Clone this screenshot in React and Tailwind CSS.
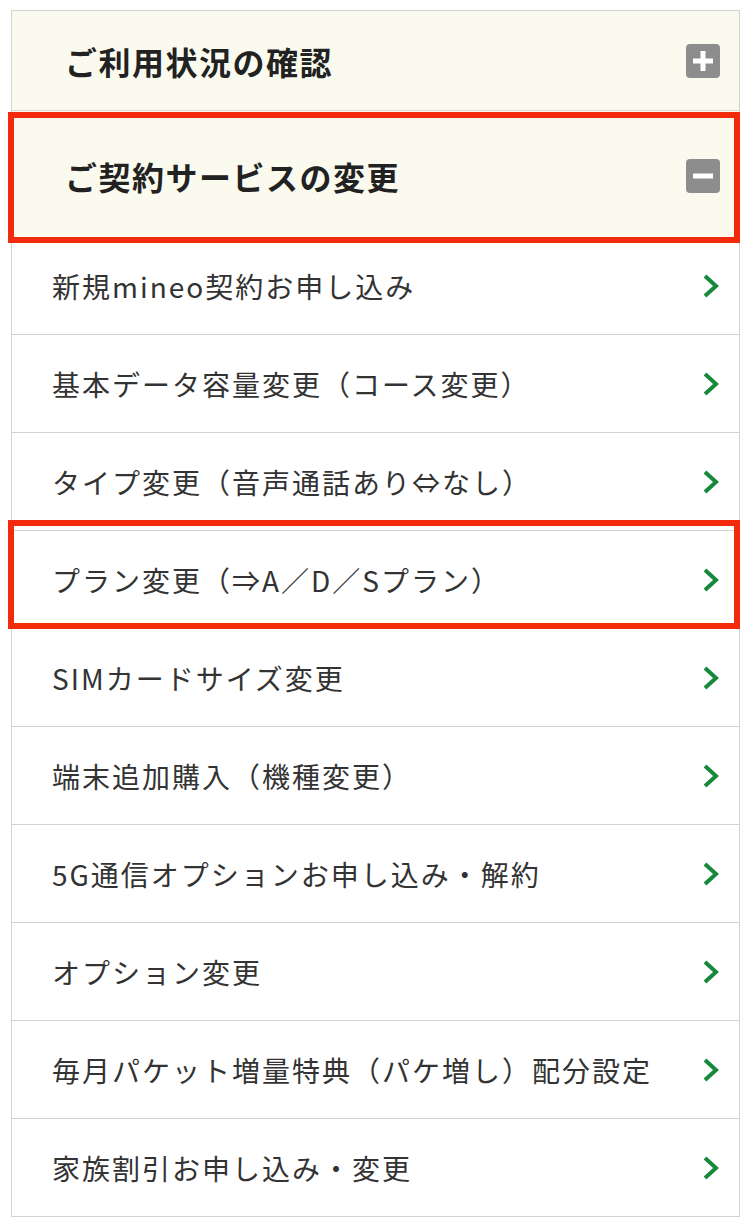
import React from 'react';

const rows = [
  '新規mineo契約お申し込み',
  '基本データ容量変更（コース変更）',
  'タイプ変更（音声通話あり⇔なし）',
  'プラン変更（⇒A／D／Sプラン）',
  'SIMカードサイズ変更',
  '端末追加購入（機種変更）',
  '5G通信オプションお申し込み・解約',
  'オプション変更',
  '毎月パケット増量特典（パケ増し）配分設定',
  '家族割引お申し込み・変更',
];

const font = { fontFamily: '"Noto Sans CJK JP", "Noto Sans", sans-serif' };

const ToggleIcon = ({ open }) => (
  <svg width="34" height="34" viewBox="0 0 34 34">
    <rect x="0" y="0" width="34" height="34" rx="4" fill="#8d8d8d" />
    <rect x="7" y="14.5" width="20" height="5" fill="#fff" />
    {!open && <rect x="14.5" y="7" width="5" height="20" fill="#fff" />}
  </svg>
);

const Chevron = () => (
  <svg width="18" height="26" viewBox="0 0 18 26">
    <polyline
      points="3,3 14,13 3,23"
      fill="none"
      stroke="#178a3a"
      strokeWidth="4"
      strokeLinejoin="miter"
    />
  </svg>
);

const App = () => {
  return (
    <div className="min-h-screen bg-white pt-[10px]" style={font}>
      <div className="ml-[11px] w-[729px] border-l border-r border-t border-[#d2d2d2]">
        <div className="h-[100px] flex items-center justify-between bg-[#fafaee] border-b border-[#dcdcd0] pl-[53px] pr-[19px]">
          <span className="text-[32px] font-bold tracking-[1.5px] text-[#222]">ご利用状況の確認</span>
          <ToggleIcon open={false} />
        </div>

        <div className="relative h-[126px] flex items-center justify-between bg-[#fafaee] pl-[53px] pr-[19px] pt-[4px]">
          <span className="text-[32px] font-bold tracking-[1.5px] text-[#222]">ご契約サービスの変更</span>
          <ToggleIcon open={true} />
          <div className="absolute left-[-4px] right-[-1px] top-[1px] bottom-[-6px] border-[6px] border-[#f42a0c] z-10 pointer-events-none"></div>
        </div>

        {rows.map((label, i) => (
          <div
            key={label}
            className="relative h-[98px] flex items-center justify-between border-b border-[#d2d2d2] pl-[40px] pr-[19px]"
          >
            <span className="text-[28px] tracking-[2px] text-[#333]">{label}</span>
            <Chevron />
            {i === 3 && (
              <div className="absolute left-[-4px] right-[-1px] top-[-11px] bottom-[-1px] border-[6px] border-[#f42a0c] z-10 pointer-events-none"></div>
            )}
          </div>
        ))}
      </div>
    </div>
  );
};

export default App;
